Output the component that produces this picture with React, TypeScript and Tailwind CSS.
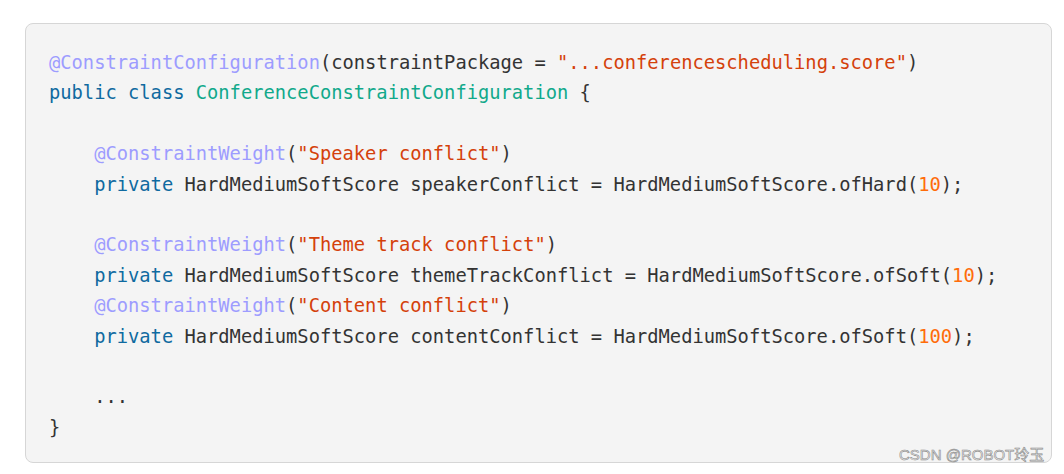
import React from "react";

type Tok = [string, string];

const K = "text-[#0f6aa0]"; // keyword
const A = "text-[#9d9cff]"; // annotation
const S = "text-[#d4410b]"; // string
const N = "text-[#ff6c0a]"; // number
const C = "text-[#11a98b]"; // class name
const P = "text-[#333333]"; // plain

const lines: Tok[][] = [
  [
    ["@ConstraintConfiguration", A],
    ["(constraintPackage = ", P],
    ['"...conferencescheduling.score"', S],
    [")", P],
  ],
  [
    ["public class ", K],
    ["ConferenceConstraintConfiguration", C],
    [" {", P],
  ],
  [],
  [
    ["    ", P],
    ["@ConstraintWeight", A],
    ["(", P],
    ['"Speaker conflict"', S],
    [")", P],
  ],
  [
    ["    ", P],
    ["private ", K],
    ["HardMediumSoftScore speakerConflict = HardMediumSoftScore.ofHard(", P],
    ["10", N],
    [");", P],
  ],
  [],
  [
    ["    ", P],
    ["@ConstraintWeight", A],
    ["(", P],
    ['"Theme track conflict"', S],
    [")", P],
  ],
  [
    ["    ", P],
    ["private ", K],
    ["HardMediumSoftScore themeTrackConflict = HardMediumSoftScore.ofSoft(", P],
    ["10", N],
    [");", P],
  ],
  [
    ["    ", P],
    ["@ConstraintWeight", A],
    ["(", P],
    ['"Content conflict"', S],
    [")", P],
  ],
  [
    ["    ", P],
    ["private ", K],
    ["HardMediumSoftScore contentConflict = HardMediumSoftScore.ofSoft(", P],
    ["100", N],
    [");", P],
  ],
  [],
  [["    ...", P]],
  [["}", P]],
];

const App = () => {
  return (
    <div className="w-[1064px] h-[474px] bg-white pt-[23px] pl-[25px] relative overflow-hidden">
      {/* code block */}
      <div className="w-[1027px] h-[440px] bg-[#f4f4f4] border border-[#d6d6d6] rounded-[8px] pt-[24px] pl-[23px]">
        <pre className="font-['DejaVu_Sans_Mono',monospace] text-[18.75px] leading-[30.4px] whitespace-pre">
          {lines.map((line, i) => (
            <div key={i} className="h-[30.4px]">
              {line.map(([t, c], j) => (
                <span key={j} className={c}>
                  {t}
                </span>
              ))}
            </div>
          ))}
        </pre>
      </div>

      {/* watermark */}
      <div className="absolute left-[899px] top-[445px] font-['Liberation_Sans','Noto_Sans_CJK_SC',sans-serif] text-[15px] leading-[20px] text-[#f4f4f4] [-webkit-text-stroke:0.6px_#8a8a8a]">
        CSDN @ROBOT玲玉
      </div>
    </div>
  );
};

export default App;
